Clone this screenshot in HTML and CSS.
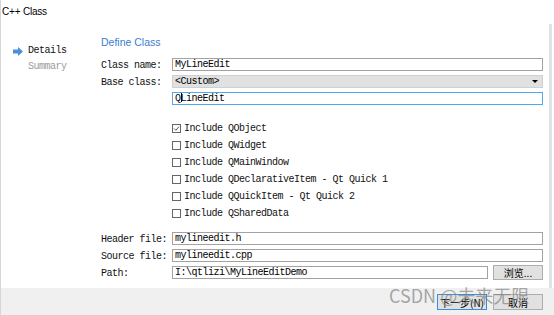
FILE: index.html
```html
<!DOCTYPE html>
<html>
<head>
<meta charset="utf-8">
<link rel="stylesheet" href="styles.css">
</head>
<body>
<div class="window">
  <div class="title">C++ Class</div>
  <div class="main">
    <nav class="nav">
      <div class="step current">
        <svg class="arrow" width="10" height="9" viewBox="0 0 10 9"><path d="M0 2.5H5V0L10 4.5L5 9V6.5H0Z" fill="#4a8fd8"/></svg>
        <span>Details</span>
      </div>
      <div class="step muted"><span class="arrow-space"></span><span>Summary</span></div>
    </nav>
    <section class="content">
      <h1 class="heading">Define Class</h1>
      <div class="rows">
        <div class="row"><span class="label">Class name:</span><div class="field">MyLineEdit</div></div>
        <div class="row"><span class="label">Base class:</span><div class="field combo">&lt;Custom&gt;<span class="caret"></span></div></div>
        <div class="row"><span class="label"></span><div class="field focus">Q<span class="cursor"></span>LineEdit</div></div>
      </div>
      <div class="checks">
        <div class="check"><svg class="box" width="9" height="9" viewBox="0 0 9 9"><rect x="0.5" y="0.5" width="8" height="8" fill="#fff" stroke="#666"/><path d="M2 4.5L3.8 6.3L7 2.6" fill="none" stroke="#555" stroke-width="1"/></svg><span>Include QObject</span></div>
        <div class="check"><svg class="box" width="9" height="9" viewBox="0 0 9 9"><rect x="0.5" y="0.5" width="8" height="8" fill="#fff" stroke="#666"/></svg><span>Include QWidget</span></div>
        <div class="check"><svg class="box" width="9" height="9" viewBox="0 0 9 9"><rect x="0.5" y="0.5" width="8" height="8" fill="#fff" stroke="#666"/></svg><span>Include QMainWindow</span></div>
        <div class="check"><svg class="box" width="9" height="9" viewBox="0 0 9 9"><rect x="0.5" y="0.5" width="8" height="8" fill="#fff" stroke="#666"/></svg><span>Include QDeclarativeItem - Qt Quick 1</span></div>
        <div class="check"><svg class="box" width="9" height="9" viewBox="0 0 9 9"><rect x="0.5" y="0.5" width="8" height="8" fill="#fff" stroke="#666"/></svg><span>Include QQuickItem - Qt Quick 2</span></div>
        <div class="check"><svg class="box" width="9" height="9" viewBox="0 0 9 9"><rect x="0.5" y="0.5" width="8" height="8" fill="#fff" stroke="#666"/></svg><span>Include QSharedData</span></div>
      </div>
      <div class="rows lower">
        <div class="row"><span class="label">Header file:</span><div class="field">mylineedit.h</div></div>
        <div class="row"><span class="label">Source file:</span><div class="field">mylineedit.cpp</div></div>
        <div class="row"><span class="label">Path:</span><div class="field">I:\qtlizi\MyLineEditDemo</div><button class="btn browse">浏览...</button></div>
      </div>
    </section>
  </div>
  <footer class="footer">
    <button class="btn primary">下一步(N)</button>
    <button class="btn">取消</button>
  </footer>
  <div class="watermark">CSDN @未来无限</div>
</div>
</body>
</html>
```
FILE: styles.css
```css
* { box-sizing: border-box; }
html, body { margin: 0; padding: 0; background: #fff; }
.window {
  position: relative;
  width: 554px;
  height: 315px;
  border-left: 1px solid #d6d6d6;
  display: flex;
  flex-direction: column;
  overflow: hidden;
  font-family: "Liberation Mono", monospace;
  font-size: 10px;
  letter-spacing: -0.5px;
  color: #111;
}
.title {
  height: 24px;
  line-height: 24px;
  padding-left: 1px;
  font-family: "Liberation Sans", Arial, sans-serif;
  font-size: 10px;
  letter-spacing: -0.2px;
  color: #000;
}
.main {
  flex: 1;
  display: flex;
  border-right: 3px solid #e2e2e2;
  margin-right: 2px;
}
.nav {
  width: 100px;
  padding-top: 19px;
  padding-left: 12px;
}
.step {
  display: flex;
  align-items: center;
  height: 16px;
  line-height: 16px;
}
.arrow { margin-right: 5px; flex: none; }
.arrow-space { width: 10px; margin-right: 5px; flex: none; }
.muted { color: #9a9a9a; }
.content {
  flex: 1;
  padding-right: 6px;
  padding-top: 11px;
}
.heading {
  margin: 0;
  height: 14px;
  line-height: 14px;
  font-family: "Liberation Sans", Arial, sans-serif;
  font-size: 10.5px;
  font-weight: normal;
  letter-spacing: 0;
  color: #3b7dd0;
}
.rows { margin-top: 9px; display: flex; flex-direction: column; gap: 4px; }
.rows.lower { margin-top: 10px; }
.row { display: flex; align-items: center; height: 13px; line-height: 13px; }
.label { width: 71px; flex: none; white-space: pre; padding-top: 2px; }
.field {
  position: relative;
  flex: 1;
  height: 13px;
  line-height: 12px;
  padding-left: 2px;
  border: 1px solid #a2a2a2;
  background: #fff;
  white-space: pre;
  color: #000;
}
.combo { background: #e1e1e1; border-color: #d0d0d0; }
.caret {
  position: absolute;
  right: 4px;
  top: 4px;
  width: 0;
  height: 0;
  border-left: 3px solid transparent;
  border-right: 3px solid transparent;
  border-top: 3px solid #000;
}
.focus { border-color: #56a6e8; }
.cursor { display: inline-block; width: 1px; height: 9px; background: #000; vertical-align: -1px; margin-right: -1px; }
.checks { margin-top: 15px; margin-left: 71px; }
.check { display: flex; align-items: center; height: 17px; }
.box { margin-right: 3px; flex: none; }
.btn {
  height: 15px;
  width: 50px;
  padding: 0;
  border: 1px solid #adadad;
  background: #e1e1e1;
  font-family: "Noto Sans CJK SC", sans-serif;
  font-size: 10px;
  letter-spacing: 0;
  line-height: 13px;
  color: #000;
}
.browse { margin-left: 5px; height: 15px; flex: none; }
.footer {
  height: 27px;
  background: #f0f0f0;
  display: flex;
  justify-content: flex-end;
  gap: 6px;
  padding-top: 6px;
  padding-right: 11px;
}
.footer .btn { height: 16px; }
.primary { border-color: #3c8ddc; }
.watermark {
  position: absolute;
  left: 388px;
  top: 284px;
  font-family: "Noto Sans CJK SC", "Liberation Sans", sans-serif;
  font-size: 18px;
  letter-spacing: 0;
  line-height: 22px;
  color: rgba(130, 130, 130, 0.7);
  white-space: nowrap;
}
```
